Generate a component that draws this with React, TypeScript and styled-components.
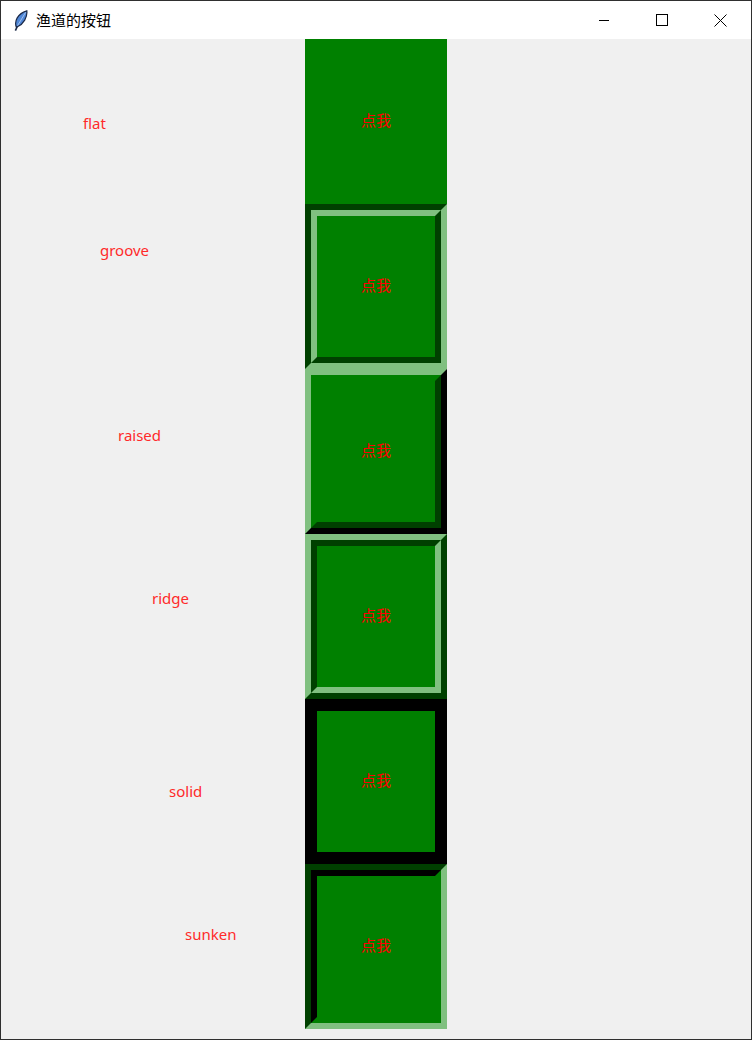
import React from "react";
import styled, { createGlobalStyle } from "styled-components";

const GlobalStyle = createGlobalStyle`
  html, body { margin: 0; padding: 0; background: #f0f0f0; }
  body { width: 752px; height: 1040px; overflow: hidden; }
  * { box-sizing: border-box; }
`;

const Window = styled.div`
  width: 752px;
  height: 1040px;
  border: 1px solid #2f2f2f;
  display: flex;
  flex-direction: column;
  background: #f0f0f0;
  overflow: hidden;
`;

const TitleBar = styled.div`
  height: 38px;
  flex: none;
  background: #ffffff;
  display: flex;
  align-items: center;
  padding-right: 2px;
`;

const AppIcon = styled.svg`
  width: 15px;
  height: 21px;
  margin-left: 12px;
  margin-right: 8px;
  flex: none;
`;

const Title = styled.span`
  flex: 1;
  font-family: "Noto Sans CJK SC", "Noto Sans", sans-serif;
  font-size: 15px;
  color: #000000;
  line-height: 20px;
`;

const CaptionButton = styled.div`
  width: 58px;
  height: 38px;
  display: flex;
  align-items: center;
  justify-content: center;
  flex: none;
`;

const Body = styled.div`
  flex: 1;
  display: grid;
  grid-template-columns: 304px 142px;
  grid-auto-rows: 165px;
  align-content: start;
`;

const LabelCell = styled.div<{ $indent: number; $top: number }>`
  padding-left: ${(p) => p.$indent}px;
  padding-top: ${(p) => p.$top}px;
  font-family: "Noto Sans", "Open Sans", sans-serif;
  font-size: 15px;
  line-height: 20px;
  color: #ff2a2a;
`;

type Relief = "flat" | "groove" | "raised" | "ridge" | "solid" | "sunken";

const G = "#008000";
const L = "#80c080";
const D = "#004000";
const K = "#000000";

// [top, right, bottom, left]
const bevels: Record<Relief, { outer: string[]; inner: string[] }> = {
  flat: { outer: [G, G, G, G], inner: [G, G, G, G] },
  groove: { outer: [D, L, L, D], inner: [L, D, D, L] },
  raised: { outer: [L, K, K, L], inner: [G, D, D, G] },
  ridge: { outer: [L, D, D, L], inner: [D, L, L, D] },
  solid: { outer: [K, K, K, K], inner: [K, K, K, K] },
  sunken: { outer: [D, L, L, D], inner: [K, G, G, K] },
};

const OuterBevel = styled.div<{ $relief: Relief }>`
  height: 100%;
  border-style: solid;
  border-width: 6px;
  border-color: ${(p) => bevels[p.$relief].outer.join(" ")};
  background: ${G};
`;

const InnerBevel = styled.div<{ $relief: Relief }>`
  height: 100%;
  border-style: solid;
  border-width: 6px;
  border-color: ${(p) => bevels[p.$relief].inner.join(" ")};
  background: ${G};
  display: flex;
  align-items: center;
  justify-content: center;
  padding-bottom: 3px;
  font-family: "Noto Sans CJK SC", sans-serif;
  font-size: 15px;
  line-height: 20px;
  color: #ff0000;
  cursor: pointer;
`;

const rows: { relief: Relief; indent: number; top: number }[] = [
  { relief: "flat", indent: 82, top: 74 },
  { relief: "groove", indent: 99, top: 36 },
  { relief: "raised", indent: 117, top: 56 },
  { relief: "ridge", indent: 151, top: 54 },
  { relief: "solid", indent: 168, top: 82 },
  { relief: "sunken", indent: 184, top: 60 },
];

function Feather() {
  return (
    <AppIcon viewBox="0 0 15 21">
      <path
        d="M3.4 17.2 C1 11.5 4.5 3.5 13.8 0.8 C14.6 7 10.6 14 4.4 16.8 Z"
        fill="#4f86d6"
        stroke="#1a2846"
        strokeWidth="1.2"
      />
      <path d="M12.6 2.4 L4.6 15.6" stroke="#9fc0ee" strokeWidth="1" fill="none" />
      <path d="M4.4 16.2 L2.4 20.6" stroke="#1a2846" strokeWidth="1.6" fill="none" />
    </AppIcon>
  );
}

export default function App() {
  return (
    <>
      <GlobalStyle />
      <Window>
        <TitleBar>
          <Feather />
          <Title>渔道的按钮</Title>
          <CaptionButton>
            <svg width="12" height="12" viewBox="0 0 12 12">
              <path d="M1 6.5 H11" stroke="#000" strokeWidth="1" />
            </svg>
          </CaptionButton>
          <CaptionButton>
            <svg width="12" height="12" viewBox="0 0 12 12">
              <rect x="0.5" y="0.5" width="11" height="11" fill="none" stroke="#000" strokeWidth="1" />
            </svg>
          </CaptionButton>
          <CaptionButton>
            <svg width="13" height="13" viewBox="0 0 13 13">
              <path d="M0.5 0.5 L12.5 12.5 M12.5 0.5 L0.5 12.5" stroke="#000" strokeWidth="1" />
            </svg>
          </CaptionButton>
        </TitleBar>
        <Body>
          {rows.map((r) => (
            <React.Fragment key={r.relief}>
              <LabelCell $indent={r.indent} $top={r.top}>
                {r.relief}
              </LabelCell>
              <OuterBevel $relief={r.relief}>
                <InnerBevel $relief={r.relief}>点我</InnerBevel>
              </OuterBevel>
            </React.Fragment>
          ))}
        </Body>
      </Window>
    </>
  );
}
